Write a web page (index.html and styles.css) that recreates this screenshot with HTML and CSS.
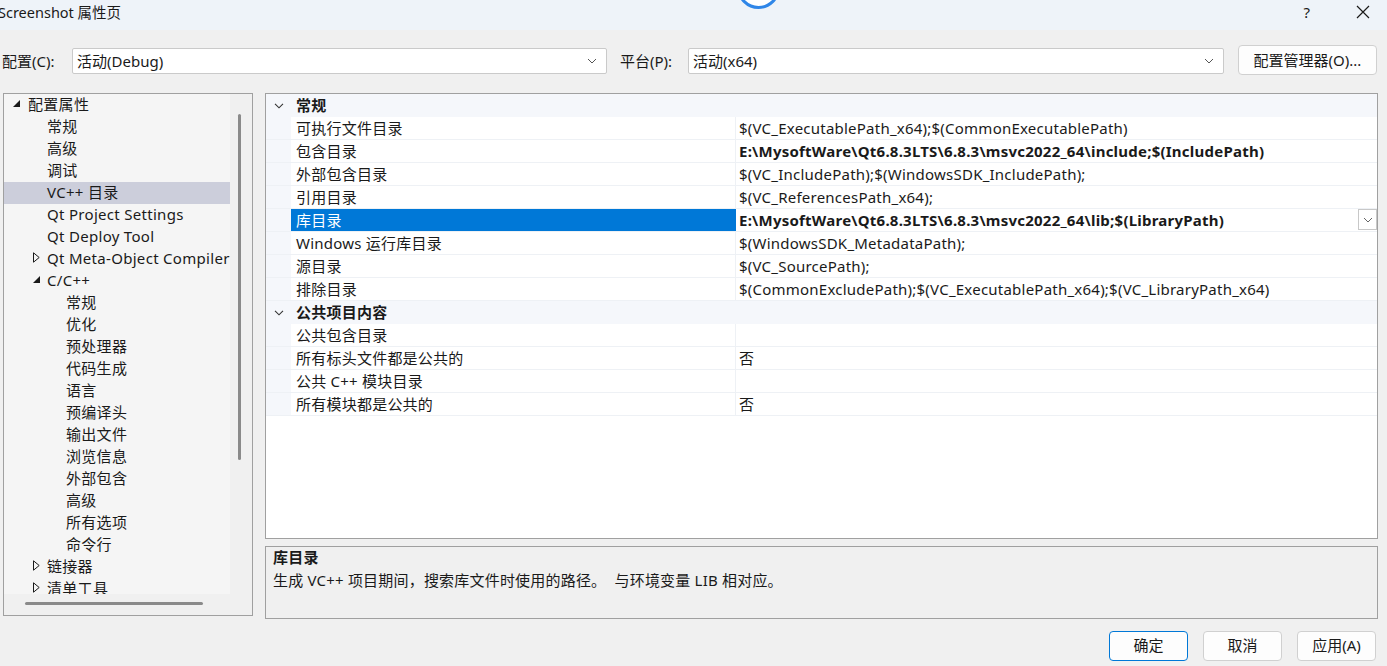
FILE: index.html
```html
<!DOCTYPE html>
<html lang="zh-CN">
<head>
    <meta charset="UTF-8">
    <title>Screenshot 属性页</title>
    <link rel="stylesheet" href="styles.css">
</head>
<body>
    <div class="titlebar">
        <div class="title">Screenshot 属性页</div>
        <div class="title-buttons">
            <span class="help">?</span>
            <svg class="close" width="14" height="14" viewBox="0 0 14 14"><path d="M1 1 L13 13 M13 1 L1 13" stroke="#1a1a1a" stroke-width="1.2" fill="none"/></svg>
        </div>
        <div class="capture-dot"></div>
    </div>

    <div class="toolbar">
        <label class="field-label">配置(C):</label>
        <div class="combo config-combo">
            <span>活动(Debug)</span>
            <svg width="10" height="6" viewBox="0 0 10 6"><path d="M1 1 L5 5 L9 1" stroke="#555" stroke-width="1" fill="none"/></svg>
        </div>
        <label class="field-label platform-label">平台(P):</label>
        <div class="combo platform-combo">
            <span>活动(x64)</span>
            <svg width="10" height="6" viewBox="0 0 10 6"><path d="M1 1 L5 5 L9 1" stroke="#555" stroke-width="1" fill="none"/></svg>
        </div>
        <button class="btn manager-btn">配置管理器(O)...</button>
    </div>

    <div class="main">
        <div class="tree">
            <div class="tree-view">
                <div class="tree-list">
                    <div class="tree-row lvl0"><svg class="tri" width="7" height="7" viewBox="0 0 7 7"><path d="M7 0 L7 7 L0 7 Z" fill="#1a1a1a"/></svg>配置属性</div>
                    <div class="tree-row lvl1">常规</div>
                    <div class="tree-row lvl1">高级</div>
                    <div class="tree-row lvl1">调试</div>
                    <div class="tree-row lvl1 selected">VC++ 目录</div>
                    <div class="tree-row lvl1">Qt Project Settings</div>
                    <div class="tree-row lvl1">Qt Deploy Tool</div>
                    <div class="tree-row lvl1"><svg class="tri tri-closed" width="7" height="11" viewBox="0 0 7 11"><path d="M0.5 0.8 L6.2 5.5 L0.5 10.2 Z" stroke="#1a1a1a" stroke-width="1" fill="none"/></svg>Qt Meta-Object Compiler</div>
                    <div class="tree-row lvl1"><svg class="tri tri-open" width="7" height="7" viewBox="0 0 7 7"><path d="M7 0 L7 7 L0 7 Z" fill="#1a1a1a"/></svg>C/C++</div>
                    <div class="tree-row lvl2">常规</div>
                    <div class="tree-row lvl2">优化</div>
                    <div class="tree-row lvl2">预处理器</div>
                    <div class="tree-row lvl2">代码生成</div>
                    <div class="tree-row lvl2">语言</div>
                    <div class="tree-row lvl2">预编译头</div>
                    <div class="tree-row lvl2">输出文件</div>
                    <div class="tree-row lvl2">浏览信息</div>
                    <div class="tree-row lvl2">外部包含</div>
                    <div class="tree-row lvl2">高级</div>
                    <div class="tree-row lvl2">所有选项</div>
                    <div class="tree-row lvl2">命令行</div>
                    <div class="tree-row lvl1"><svg class="tri tri-closed" width="7" height="11" viewBox="0 0 7 11"><path d="M0.5 0.8 L6.2 5.5 L0.5 10.2 Z" stroke="#1a1a1a" stroke-width="1" fill="none"/></svg>链接器</div>
                    <div class="tree-row lvl1 last"><svg class="tri tri-closed" width="7" height="11" viewBox="0 0 7 11"><path d="M0.5 0.8 L6.2 5.5 L0.5 10.2 Z" stroke="#1a1a1a" stroke-width="1" fill="none"/></svg>清单工具</div>
                </div>
                <div class="vscroll"><div class="vthumb"></div></div>
            </div>
            <div class="hscroll"><div class="hthumb"></div></div>
        </div>

        <div class="right-col">
            <div class="grid">
                <div class="grid-row category">
                    <div class="gutter"><svg width="10" height="6" viewBox="0 0 10 6"><path d="M1 0.8 L5 4.8 L9 0.8" stroke="#333" stroke-width="1.1" fill="none"/></svg></div>
                    <div class="cat-name">常规</div>
                </div>
                <div class="grid-row">
                    <div class="gutter"></div>
                    <div class="name">可执行文件目录</div>
                    <div class="value">$(VC_ExecutablePath_x64);$(CommonExecutablePath)</div>
                </div>
                <div class="grid-row">
                    <div class="gutter"></div>
                    <div class="name">包含目录</div>
                    <div class="value bold">E:\MysoftWare\Qt6.8.3LTS\6.8.3\msvc2022_64\include;$(IncludePath)</div>
                </div>
                <div class="grid-row">
                    <div class="gutter"></div>
                    <div class="name">外部包含目录</div>
                    <div class="value">$(VC_IncludePath);$(WindowsSDK_IncludePath);</div>
                </div>
                <div class="grid-row">
                    <div class="gutter"></div>
                    <div class="name">引用目录</div>
                    <div class="value">$(VC_ReferencesPath_x64);</div>
                </div>
                <div class="grid-row active">
                    <div class="gutter"></div>
                    <div class="name">库目录</div>
                    <div class="value bold">
                        <span>E:\MysoftWare\Qt6.8.3LTS\6.8.3\msvc2022_64\lib;$(LibraryPath)</span>
                        <div class="drop-btn"><svg width="10" height="6" viewBox="0 0 10 6"><path d="M1 1 L5 5 L9 1" stroke="#666" stroke-width="1" fill="none"/></svg></div>
                    </div>
                </div>
                <div class="grid-row">
                    <div class="gutter"></div>
                    <div class="name">Windows 运行库目录</div>
                    <div class="value">$(WindowsSDK_MetadataPath);</div>
                </div>
                <div class="grid-row">
                    <div class="gutter"></div>
                    <div class="name">源目录</div>
                    <div class="value">$(VC_SourcePath);</div>
                </div>
                <div class="grid-row">
                    <div class="gutter"></div>
                    <div class="name">排除目录</div>
                    <div class="value">$(CommonExcludePath);$(VC_ExecutablePath_x64);$(VC_LibraryPath_x64)</div>
                </div>
                <div class="grid-row category">
                    <div class="gutter"><svg width="10" height="6" viewBox="0 0 10 6"><path d="M1 0.8 L5 4.8 L9 0.8" stroke="#333" stroke-width="1.1" fill="none"/></svg></div>
                    <div class="cat-name">公共项目内容</div>
                </div>
                <div class="grid-row">
                    <div class="gutter"></div>
                    <div class="name">公共包含目录</div>
                    <div class="value"></div>
                </div>
                <div class="grid-row">
                    <div class="gutter"></div>
                    <div class="name">所有标头文件都是公共的</div>
                    <div class="value">否</div>
                </div>
                <div class="grid-row">
                    <div class="gutter"></div>
                    <div class="name">公共 C++ 模块目录</div>
                    <div class="value"></div>
                </div>
                <div class="grid-row">
                    <div class="gutter"></div>
                    <div class="name">所有模块都是公共的</div>
                    <div class="value">否</div>
                </div>
            </div>

            <div class="desc">
                <div class="desc-title">库目录</div>
                <div class="desc-text">生成 VC++ 项目期间，搜索库文件时使用的路径。&nbsp; 与环境变量 LIB 相对应。</div>
            </div>
        </div>
    </div>

    <div class="footer">
        <button class="btn default-btn">确定</button>
        <button class="btn">取消</button>
        <button class="btn">应用(A)</button>
    </div>
</body>
</html>
```

FILE: styles.css
```css
body {
    margin: 0;
    width: 1387px;
    height: 666px;
    overflow: hidden;
    background-color: #f0f0f0;
    font-family: 'Noto Sans', 'Noto Sans CJK SC', sans-serif;
    font-size: 15px;
    color: #1a1a1a;
}

.titlebar {
    position: relative;
    height: 30px;
    background-color: #eef3f9;
    display: flex;
    align-items: center;
    justify-content: space-between;
}

.title {
    margin-left: -2px;
    font-size: 14.5px;
    line-height: 20px;
    padding-bottom: 6px;
}

.title-buttons {
    display: flex;
    align-items: center;
    gap: 46px;
    margin-right: 17px;
    padding-bottom: 6px;
}

.help {
    font-size: 15px;
}

/* overlay from the screenshot tool */
.capture-dot {
    position: absolute;
    left: 737px;
    top: -34px;
    width: 37px;
    height: 37px;
    border: 3px solid #2f86e8;
    border-radius: 50%;
    background: #fff;
}

.toolbar {
    display: flex;
    align-items: center;
    height: 30px;
    padding: 15px 0 18px 2px;
}

.field-label {
    width: 70px;
}

.platform-label {
    margin-left: 13px;
    width: 68px;
}

.combo {
    height: 26px;
    box-sizing: border-box;
    background: #fff;
    border: 1px solid #cacaca;
    border-radius: 2px;
    display: flex;
    align-items: center;
    justify-content: space-between;
    padding: 0 9px 0 4px;
    margin-top: 1px;
}

.config-combo {
    width: 535px;
}

.platform-combo {
    width: 536px;
}

.btn {
    font-family: 'Noto Sans', 'Noto Sans CJK SC', sans-serif;
    font-size: 15px;
    color: #1a1a1a;
    background: #fdfdfd;
    border: 1px solid #d0d0d0;
    border-radius: 4px;
    height: 30px;
    width: 79px;
    padding: 0 0 2px 0;
}

.manager-btn {
    margin-left: 14px;
    width: 139px;
}

.main {
    display: flex;
    gap: 12px;
    padding-left: 3px;
}

.tree {
    width: 250px;
    height: 523px;
    box-sizing: border-box;
    border: 1px solid #a0a0a0;
    display: flex;
    flex-direction: column;
    letter-spacing: 0.3px;
}

.tree-view {
    display: flex;
    height: 500px;
}

.tree-list {
    width: 226px;
    background: #f5f5f5;
    overflow: hidden;
}

.tree-row {
    height: 22px;
    box-sizing: border-box;
    padding-bottom: 3px;
    white-space: nowrap;
    display: flex;
    align-items: center;
}

.tree-row.lvl0 {
    padding-left: 9px;
}

.tree-row.lvl0 .tri {
    margin-right: 8px;
    margin-top: -1px;
}

.tree-row.lvl1 {
    padding-left: 43px;
}

.tree-row.lvl2 {
    padding-left: 62px;
}

.tree-row .tri-closed,
.tree-row .tri-open {
    margin-left: -14px;
    margin-right: 7px;
}

.tree-row .tri-open {
    margin-top: -1px;
}

.tree-row.selected {
    background: #cccedb;
}

.vscroll {
    width: 22px;
}

.vthumb {
    margin: 20px 0 0 8px;
    width: 3px;
    height: 346px;
    border-radius: 2px;
    background: #8a8a8a;
}

.hscroll {
    flex: 1;
}

.hthumb {
    margin: 8px 0 0 21px;
    width: 178px;
    height: 3px;
    border-radius: 2px;
    background: #8a8a8a;
}

.right-col {
    width: 1113px;
    display: flex;
    flex-direction: column;
    gap: 7px;
}

.grid {
    height: 446px;
    box-sizing: border-box;
    border: 1px solid #a0a0a0;
    background: #fff;
    letter-spacing: 0.23px;
}

.grid-row {
    display: flex;
    height: 23px;
    line-height: 22px;
    box-sizing: border-box;
    border-bottom: 1px solid #eef1f5;
}

.grid-row .gutter {
    width: 25px;
    background: #f5f7fb;
    display: flex;
    align-items: center;
    justify-content: center;
}

.grid-row .name {
    width: 439px;
    padding-left: 5px;
    border-right: 1px solid #eef1f5;
    white-space: nowrap;
}

.grid-row .value {
    flex: 1;
    padding-left: 3px;
    white-space: nowrap;
    display: flex;
    justify-content: space-between;
}

.value.bold {
    font-weight: bold;
}

.grid-row.category {
    background: #f5f7fb;
    border-bottom: none;
}

.cat-name {
    padding-left: 5px;
    font-weight: bold;
}

.grid-row.active .name {
    background: #0078d7;
    color: #fff;
    border-right-color: #0078d7;
}

.drop-btn {
    width: 19px;
    height: 21px;
    box-sizing: border-box;
    border: 1px solid #c8c8c8;
    background: #fff;
    display: flex;
    align-items: center;
    justify-content: center;
}

.desc {
    height: 73px;
    box-sizing: border-box;
    border: 1px solid #a0a0a0;
    padding: 0 7px;
    letter-spacing: 0.2px;
}

.desc-title {
    font-weight: bold;
    line-height: 21px;
}

.desc-text {
    line-height: 24px;
}

.footer {
    display: flex;
    justify-content: flex-end;
    gap: 15px;
    padding: 12px 11px 0 0;
}

.footer .btn {
    padding-bottom: 3px;
}

.default-btn {
    border: 1px solid #0078d7;
}
```
